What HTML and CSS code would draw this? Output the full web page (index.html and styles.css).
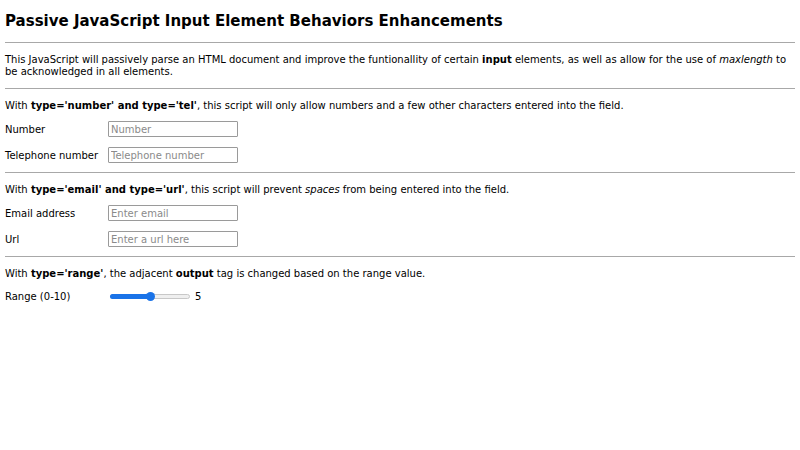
FILE: index.html
```
<!DOCTYPE html>
<html>
<head>
<meta charset="utf-8">
<link rel="stylesheet" href="styles.css">
</head>
<body>
<h1 class="title">Passive JavaScript Input Element Behaviors Enhancements</h1>
<hr class="rule first">
<p class="text">This JavaScript will passively parse an HTML document and improve the funtionallity of certain <b>input</b> elements, as well as allow for the use of <i>maxlength</i> to be acknowledged in all elements.</p>
<hr class="rule">
<p class="text">With <b>type='number' and type='tel'</b>, this script will only allow numbers and a few other characters entered into the field.</p>
<div class="row"><label class="lbl">Number</label><input class="field" type="text" placeholder="Number"></div>
<div class="row"><label class="lbl">Telephone number</label><input class="field" type="text" placeholder="Telephone number"></div>
<hr class="rule">
<p class="text">With <b>type='email' and type='url'</b>, this script will prevent <i>spaces</i> from being entered into the field.</p>
<div class="row"><label class="lbl">Email address</label><input class="field" type="text" placeholder="Enter email"></div>
<div class="row"><label class="lbl">Url</label><input class="field" type="text" placeholder="Enter a url here"></div>
<hr class="rule">
<p class="text">With <b>type='range'</b>, the adjacent <b>output</b> tag is changed based on the range value.</p>
<div class="row range-row"><label class="lbl">Range (0-10)</label><span class="range"><span class="track"><span class="fill"></span><span class="thumb"></span></span></span><output class="out">5</output></div>
</body>
</html>
```
FILE: styles.css
```
html, body { margin: 0; padding: 0; background: #fff; }
body {
  padding: 0 5px;
  font-family: "DejaVu Sans", sans-serif;
  font-size: 10px;
  color: #000;
}
.title {
  font-size: 15px;
  font-weight: bold;
  margin: 0;
  padding-top: 11px;
  line-height: 20px;
}
.rule {
  border: 0;
  height: 1px;
  background: #a8a8a8;
  margin: 10px 0 0;
}
.rule.first { margin-top: 11px; }
.row + .rule { margin-top: 9px; }
.text {
  margin: 11px 0 0;
  line-height: 12px;
}
.row {
  display: flex;
  align-items: center;
  height: 16px;
  margin-top: 10px;
}
.text + .row { margin-top: 9px; }
.text + .range-row { margin-top: 8px; }
.lbl { width: 103px; flex: none; }
.field {
  box-sizing: border-box;
  width: 130px;
  height: 16px;
  margin: 0;
  padding: 0 2px;
  border: 1px solid #9a9a9a;
  border-radius: 1px;
  font-family: "DejaVu Sans", sans-serif;
  font-size: 10px;
  color: #000;
  outline: none;
}
.field::placeholder { color: #8a8a8a; }
.range { display: flex; align-items: center; width: 87px; height: 16px; padding-left: 2px; box-sizing: border-box; }
.track { position: relative; width: 80px; height: 5px; background: #efefef; border: 1px solid #c8c8c8; border-radius: 3px; box-sizing: border-box; }
.fill { position: absolute; left: -1px; top: -1px; height: 5px; width: 42px; background: #1a73e8; border-radius: 3px; }
.thumb { position: absolute; left: 35px; top: -3px; width: 9px; height: 9px; border-radius: 50%; background: #1a73e8; }
.out { margin-left: 0; }
```
